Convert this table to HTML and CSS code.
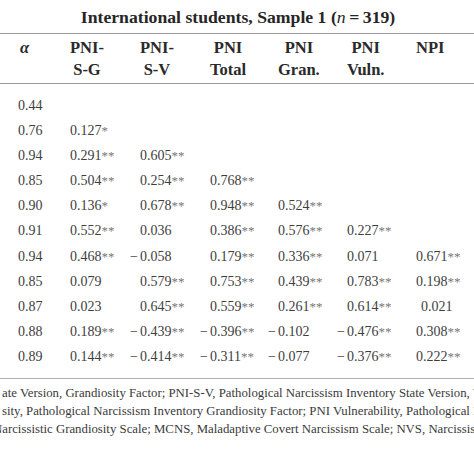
FILE: index.html
```html
<!DOCTYPE html>
<html>
<head>
<meta charset="utf-8">
<link rel="stylesheet" href="styles.css">
</head>
<body>
<div class="page">
  <div class="title">International students, Sample 1 (<i>n</i>&thinsp;=&thinsp;319)</div>
  <table class="tbl">
    <colgroup>
      <col class="c0"><col class="c1"><col class="c2"><col class="c3"><col class="c4"><col class="c5"><col class="c6">
    </colgroup>
    <thead>
      <tr>
        <th><span class="alpha">α</span></th>
        <th><span class="h">PNI-<br>S-G</span></th>
        <th><span class="h">PNI-<br>S-V</span></th>
        <th><span class="h">PNI<br>Total</span></th>
        <th><span class="h">PNI<br>Gran.</span></th>
        <th><span class="h">PNI<br>Vuln.</span></th>
        <th><span class="h">NPI</span></th>
      </tr>
    </thead>
    <tbody>
      <tr><td>0.44</td><td></td><td></td><td></td><td></td><td></td><td></td></tr>
      <tr><td>0.76</td><td>0.127<s>*</s></td><td></td><td></td><td></td><td></td><td></td></tr>
      <tr><td>0.94</td><td>0.291<s>**</s></td><td>0.605<s>**</s></td><td></td><td></td><td></td><td></td></tr>
      <tr><td>0.85</td><td>0.504<s>**</s></td><td>0.254<s>**</s></td><td>0.768<s>**</s></td><td></td><td></td><td></td></tr>
      <tr><td>0.90</td><td>0.136<s>*</s></td><td>0.678<s>**</s></td><td>0.948<s>**</s></td><td>0.524<s>**</s></td><td></td><td></td></tr>
      <tr><td>0.91</td><td>0.552<s>**</s></td><td>0.036</td><td>0.386<s>**</s></td><td>0.576<s>**</s></td><td>0.227<s>**</s></td><td></td></tr>
      <tr><td>0.94</td><td>0.468<s>**</s></td><td><b class="m">−</b>0.058</td><td>0.179<s>**</s></td><td>0.336<s>**</s></td><td>0.071</td><td>0.671<s>**</s></td></tr>
      <tr><td>0.85</td><td>0.079</td><td>0.579<s>**</s></td><td>0.753<s>**</s></td><td>0.439<s>**</s></td><td>0.783<s>**</s></td><td>0.198<s>**</s></td></tr>
      <tr><td>0.87</td><td>0.023</td><td>0.645<s>**</s></td><td>0.559<s>**</s></td><td>0.261<s>**</s></td><td>0.614<s>**</s></td><td><span class="sh">0.021</span></td></tr>
      <tr><td>0.88</td><td>0.189<s>**</s></td><td><b class="m">−</b>0.439<s>**</s></td><td><b class="m">−</b>0.396<s>**</s></td><td><b class="m">−</b>0.102</td><td><b class="m">−</b>0.476<s>**</s></td><td>0.308<s>**</s></td></tr>
      <tr><td>0.89</td><td>0.144<s>**</s></td><td><b class="m">−</b>0.414<s>**</s></td><td><b class="m">−</b>0.311<s>**</s></td><td><b class="m">−</b>0.077</td><td><b class="m">−</b>0.376<s>**</s></td><td>0.222<s>**</s></td></tr>
    </tbody>
  </table>
  <div class="notes">
    <div class="ln l1">ate Version, Grandiosity Factor; PNI-S-V, Pathological Narcissism Inventory State Version, Vulnerability Factor;</div>
    <div class="ln l2">sity, Pathological Narcissism Inventory Grandiosity Factor; PNI Vulnerability, Pathological Narcissism</div>
    <div class="ln l3">Narcissistic Grandiosity Scale; MCNS, Maladaptive Covert Narcissism Scale; NVS, Narcissistic Vulnerability</div>
  </div>
</div>
</body>
</html>
```
FILE: styles.css
```css
html, body {
  margin: 0;
  padding: 0;
  background: #fff;
}
body {
  width: 474px;
  height: 474px;
  overflow: hidden;
  font-family: "Liberation Serif", "Times New Roman", serif;
  color: #3a3a3a;
}
.page {
  width: 474px;
  overflow: hidden;
}
.title {
  height: 33px;
  line-height: 35px;
  text-align: center;
  font-weight: bold;
  font-size: 17.7px;
  color: #262626;
  padding-left: 2px;
}
.title i {
  font-weight: normal;
}
.tbl {
  width: 474px;
  table-layout: fixed;
  border-collapse: collapse;
  font-size: 14px;
}
.c0 { width: 70px; }
.c1 { width: 70px; }
.c2 { width: 70px; }
.c3 { width: 68px; }
.c4 { width: 69px; }
.c5 { width: 69px; }
.c6 { width: 58px; }
.tbl thead tr {
  border-top: 1.5px solid #9a9a9a;
  border-bottom: 1.5px solid #9a9a9a;
}
.tbl th {
  padding: 3px 0 2px 0;
  text-align: left;
  vertical-align: top;
  font-weight: bold;
  font-size: 16.5px;
  line-height: 22px;
  color: #2a2a2a;
}
.tbl th:first-child,
.tbl td:first-child {
  padding-left: 18px;
}
.h {
  display: inline-block;
  text-align: center;
}
.alpha {
  font-style: italic;
  padding-left: 2px;
}
.tbl td {
  padding: 0;
  height: 25.1px;
  line-height: 25.1px;
  white-space: nowrap;
  color: #3e3e3e;
}
.tbl tbody tr:first-child td {
  padding-top: 9px;
}
.tbl tbody tr:last-child {
  border-bottom: 1.5px solid #b0b0b0;
}
.tbl tbody tr:last-child td {
  padding-bottom: 9px;
}
.tbl s {
  text-decoration: none;
  color: #777;
  font-size: 13px;
  line-height: 0;
}
.m {
  font-weight: normal;
  display: inline-block;
  width: 10px;
  margin-left: -10px;
  line-height: 0;
}
.sh {
  padding-left: 5px;
}
.notes {
  padding-top: 5px;
  font-size: 12.8px;
  line-height: 18px;
  color: #3a3a3a;
}
.ln {
  white-space: nowrap;
}
.l1 { margin-left: 2px; }
.l2 { margin-left: 2px; }
.l3 { margin-left: -7px; }
```
